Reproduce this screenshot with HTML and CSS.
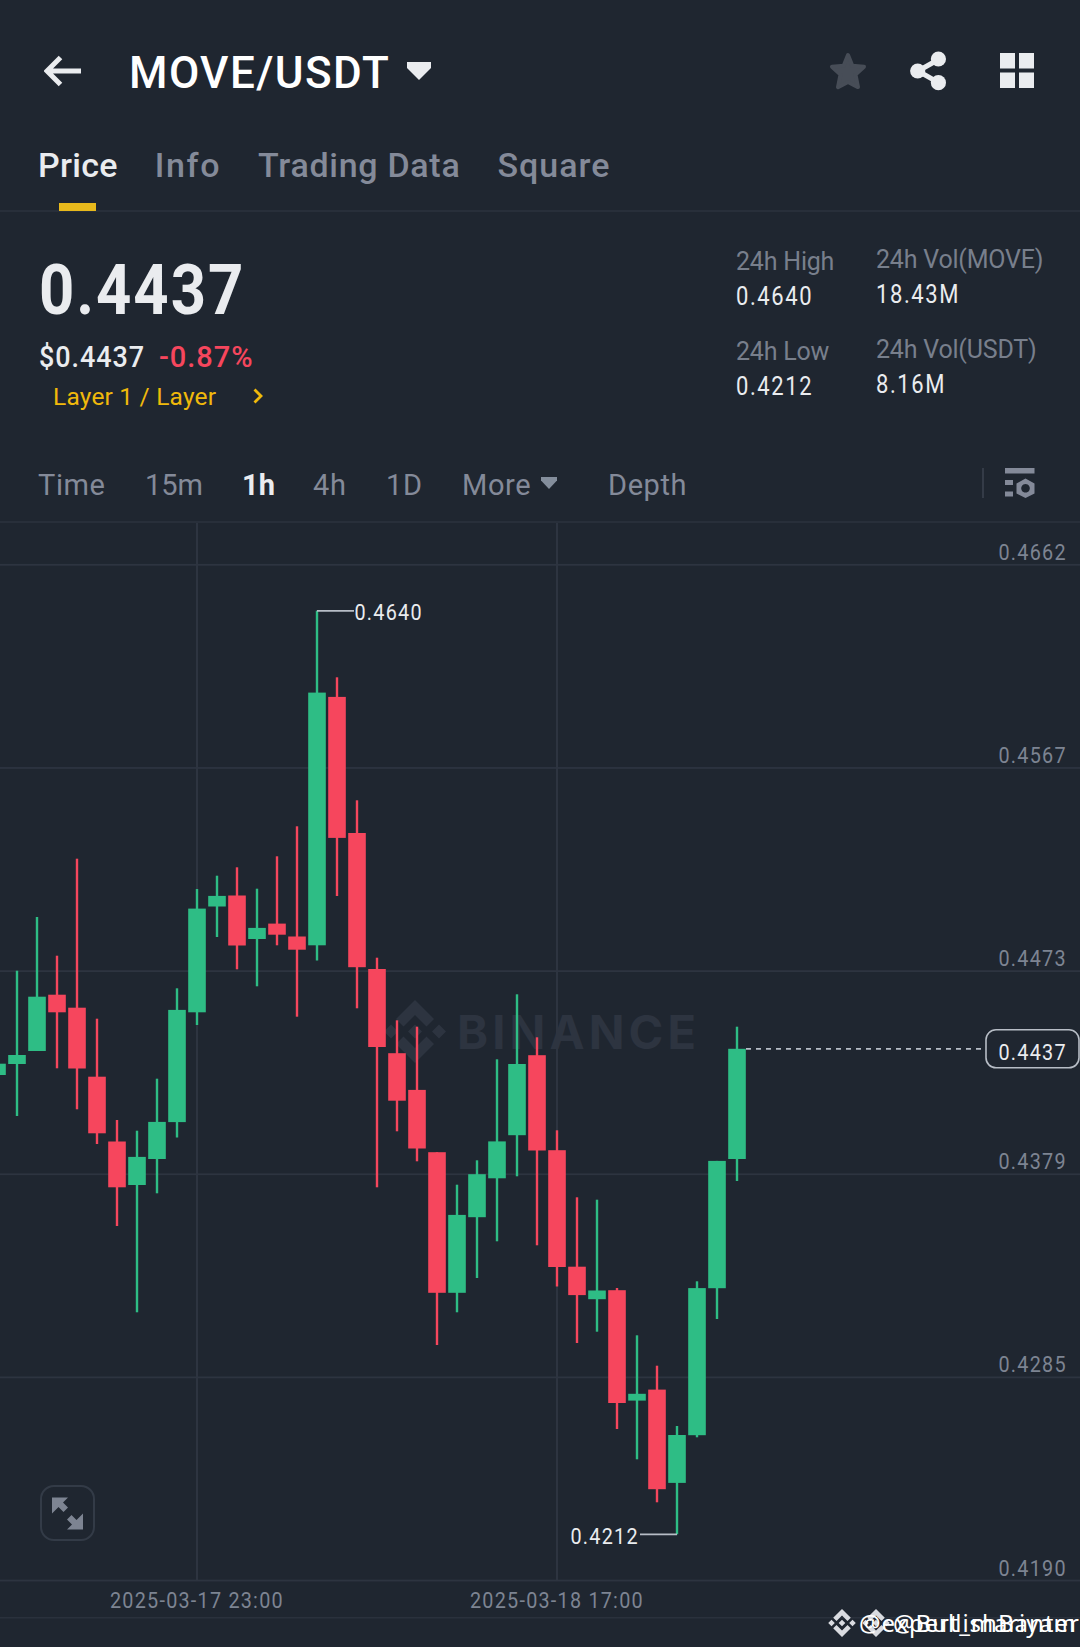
FILE: index.html
```html
<!DOCTYPE html>
<html lang="en">
<head>
    <meta charset="UTF-8">
    <meta name="viewport" content="width=device-width, initial-scale=1.0">
    <title>MOVE/USDT</title>
    <link rel="stylesheet" href="styles.css">
</head>
<body>
    <header class="header">
        <svg class="back" width="38" height="32" viewBox="0 0 38 32">
            <path d="M37 16H4M16.500 2.500L3 16l13.500 13.500" fill="none" stroke="#eaecef" stroke-width="5"/>
        </svg>
        <h1 class="pair">MOVE/USDT</h1>
        <svg class="caret" width="24" height="18" viewBox="0 0 24 18">
            <path d="M0 0h24v6L12 18 0 6z" fill="#eaecef"/>
        </svg>
        <div class="header-icons">
            <svg width="38" height="40" viewBox="0 0 38 40">
                <path d="M19 4l4.300 10.700 11.700 1-8.500 7.900 2.500 12.500L19 31l-10 5.100 2.500-12.500L3 15.700l11.700-1z" fill="#474d57" stroke="#474d57" stroke-width="4" stroke-linejoin="round"/>
            </svg>
            <svg width="36" height="40" viewBox="0 0 36 40">
                <path d="M28.500 8.500L8 20l20.500 11.700" fill="none" stroke="#eaecef" stroke-width="5"/>
                <circle cx="28.400" cy="8" r="7.600" fill="#eaecef"/>
                <circle cx="7.700" cy="20" r="7.600" fill="#eaecef"/>
                <circle cx="28.400" cy="31.700" r="7.600" fill="#eaecef"/>
            </svg>
            <svg width="34" height="35" viewBox="0 0 34 35">
                <path d="M0 0h15v15.500H0zM19 0h15v15.500H19zM0 19.500h15V35H0zM19 19.500h15V35H19z" fill="#eaecef"/>
            </svg>
        </div>
    </header>

    <nav class="tabs">
        <a class="tab active">Price</a>
        <a class="tab info">Info</a>
        <a class="tab">Trading Data</a>
        <a class="tab square">Square</a>
    </nav>

    <section class="summary">
        <div class="price-block">
            <div class="last-price num">0.4437</div>
            <div class="price-row">
                <span class="usd num">$0.4437</span>
                <span class="change">-0.87%</span>
            </div>
            <div class="category">
                <span>Layer 1 / Layer</span>
                <svg width="10" height="16" viewBox="0 0 10 16">
                    <path d="M1.500 1.500L8 8l-6.500 6.500" fill="none" stroke="#f0b90b" stroke-width="2.800"/>
                </svg>
            </div>
        </div>
        <div class="stats">
            <div class="stat-col high-low">
                <div class="stat"><span class="label">24h High</span><span class="value num">0.4640</span></div>
                <div class="stat"><span class="label">24h Low</span><span class="value num">0.4212</span></div>
            </div>
            <div class="stat-col volume">
                <div class="stat"><span class="label">24h Vol(MOVE)</span><span class="value num">18.43M</span></div>
                <div class="stat"><span class="label">24h Vol(USDT)</span><span class="value num">8.16M</span></div>
            </div>
        </div>
    </section>

    <nav class="intervals">
        <span class="w-time">Time</span>
        <span class="w-15m">15m</span>
        <span class="w-1h active">1h</span>
        <span class="w-4h">4h</span>
        <span class="w-1d">1D</span>
        <span class="w-more">More
            <svg width="16" height="12" viewBox="0 0 16 12"><path d="M0 0h16v3.500L8 12 0 3.500z" fill="#848e9c"/></svg>
        </span>
        <span>Depth</span>
        <div class="settings">
            <svg width="30" height="30" viewBox="0 0 30 30">
                <path d="M0 0h29.500v5.500H0zM0 12h8v5H0zM0 23.500h8v5H0z" fill="#848a99"/>
                <path d="M20.500 10.500l9 5v10l-9 4.500-9-4.500v-10zM20.500 16a4.300 4.300 0 1 0 .01 0z" fill="#848a99" fill-rule="evenodd"/>
            </svg>
        </div>
    </nav>

    <main class="chart">
        <svg id="chart" width="1080" height="1124" viewBox="0 523 1080 1124">
            <g id="grid"></g>
            <g id="brand" fill="#2d3440">
                <path d="M415 1000l19 19-7.500 7.500-11.500-11.500-11.500 11.500-7.500-7.500z"/>
                <path d="M415 1063l19-19-7.500-7.500-11.500 11.500-11.500-11.500-7.500 7.500z"/>
                <path d="M391 1024.500l7 7-7 7-7-7zM415 1024.500l7 7-7 7-7-7zM439 1024.500l7 7-7 7-7-7z"/>
                <text class="brand-name" x="457" y="1048.500" textLength="239">BINANCE</text>
            </g>
            <g id="candles"></g>
            <g id="labels"></g>

            <!-- last price marker -->
            <path d="M746 1048.800H982" stroke="#b7bdc6" stroke-width="1.800" stroke-dasharray="5 5"/>
            <rect x="986" y="1029.800" width="93" height="38" rx="10" fill="#1f2630" stroke="#b7bdc6" stroke-width="1.600"/>

            <!-- high / low pointers -->
            <path d="M317 610.800h37M640 1534.300h37" stroke="#b7bdc6" stroke-width="1.800"/>

            <!-- fullscreen button -->
            <rect x="41" y="1486" width="53" height="54" rx="13" fill="none" stroke="#333b47" stroke-width="2"/>
            <path d="M52 1497.500h16l-5 5 5 5-4.500 4.500-5-5-6.500 6.500zM83 1529.500H67l5-5-5-5 4.500-4.500 5 5 6.500-6.500z" fill="#7d8492"/>
            <g id="marks"></g>

            <!-- authors -->
            <g id="authors" fill="#d9dbe0">
                <path id="logo" d="M842 1609l8.800 8.800-3.300 3.300-5.500-5.500-5.500 5.500-3.300-3.300zM842 1637l8.800-8.800-3.300-3.300-5.500 5.500-5.500-5.500-3.300 3.300zM831.500 1619.700l3.300 3.300-3.300 3.300-3.300-3.300zM842 1619.700l3.300 3.300-3.300 3.300-3.300-3.300zM852.500 1619.700l3.300 3.300-3.300 3.300-3.300-3.300z"/>
                <use href="#logo" x="34"/>
                <text class="author" x="859" y="1631.500" textLength="217">@expert_mariyam</text>
                <text class="author" x="893" y="1631.500" textLength="186">@BullishBanter</text>
            </g>
        </svg>
    </main>

    <script>
        const UP = '#2ebd85';
        const DOWN = '#f6465d';
        const NS = 'http://www.w3.org/2000/svg';

        // direction, wick top, body top, body bottom, wick bottom
        const candles = [
            [1, 1063.7, 1063.7, 1075, 1075],
            [1, 970.7, 1055, 1064, 1116],
            [1, 917, 996.7, 1051, 1051],
            [0, 955.7, 994.7, 1012.3, 1068.3],
            [0, 858.7, 1007.7, 1068.5, 1109.3],
            [0, 1018.7, 1076.7, 1133.3, 1144],
            [0, 1120, 1141.5, 1187.3, 1226],
            [1, 1130.7, 1156.9, 1185, 1312.3],
            [1, 1078.7, 1121.9, 1159, 1193.3],
            [1, 988.3, 1009.9, 1122.1, 1137.5],
            [1, 889, 908.6, 1012.3, 1025],
            [1, 875.7, 895.9, 906.5, 937],
            [0, 867.3, 895.5, 945.5, 969.3],
            [1, 888.7, 927.9, 939, 986.3],
            [0, 856.3, 923.6, 934.7, 945.3],
            [0, 826.3, 936.5, 949.7, 1016.7],
            [1, 610.7, 692.6, 945.3, 960.5],
            [0, 677.3, 696.9, 837.9, 896],
            [0, 800.3, 833, 967.2, 1008.3],
            [0, 957.7, 969, 1047, 1187.3],
            [0, 1020.3, 1053.2, 1100.7, 1131.3],
            [0, 1026.7, 1089.9, 1148.5, 1161.3],
            [0, 1152.2, 1152.2, 1292.8, 1345],
            [1, 1184.7, 1214.9, 1292.8, 1312.3],
            [1, 1160.3, 1174.2, 1217.2, 1278],
            [1, 1059.3, 1141.4, 1178.3, 1241.3],
            [1, 994.3, 1064, 1135.2, 1176.3],
            [0, 1037.3, 1055.2, 1150.5, 1245.3],
            [0, 1130.3, 1150.2, 1267, 1286.5],
            [0, 1197.3, 1266.7, 1295.1, 1343],
            [1, 1199.7, 1290.5, 1299.2, 1331.7],
            [0, 1288, 1290.2, 1403, 1429],
            [1, 1335.3, 1393.8, 1400.6, 1459.3],
            [0, 1365.7, 1389.6, 1489.2, 1502.3],
            [1, 1426, 1435, 1482.9, 1534.3],
            [1, 1281.3, 1288.1, 1435.2, 1437.3],
            [1, 1160.9, 1160.9, 1288.2, 1319],
            [1, 1026.7, 1048.8, 1159, 1181]
        ];

        function add(parent, tag, attrs, text) {
            const el = document.createElementNS(NS, tag);
            for (const key in attrs) {
                el.setAttribute(key, attrs[key]);
            }
            if (text) {
                el.textContent = text;
            }
            document.getElementById(parent).appendChild(el);
        }

        function label(parent, x, y, text, cls) {
            add(parent, 'text', { class: cls, transform: 'translate(' + x + ' ' + y + ') scale(.88 1)' }, text);
        }

        const prices = ['0.4662', '0.4567', '0.4473', '0.4379', '0.4285', '0.4190'];
        prices.forEach(function(price, i) {
            const y = 564.8 + i * 203.15;
            add('grid', 'rect', { x: 0, y: y - 0.9, width: 1080, height: 1.8, fill: '#2d3440' });
            label('labels', 998.5, y - 5, price, 'axis');
        });
        [197, 557].forEach(function(x) {
            add('grid', 'rect', { x: x - 1, y: 523, width: 2, height: 1057, fill: '#2d3440' });
        });
        add('grid', 'rect', { x: 0, y: 1617, width: 1080, height: 1.5, fill: '#2a313c' });

        candles.forEach(function(c, i) {
            const x = i * 20 - 3;
            const fill = c[0] ? UP : DOWN;
            add('candles', 'rect', { x: x - 1.2, y: c[1], width: 2.4, height: c[4] - c[1], fill: fill });
            add('candles', 'rect', { x: x - 8.8, y: c[2], width: 17.6, height: c[3] - c[2], fill: fill });
        });

        label('labels', 110, 1608.4, '2025-03-17 23:00', 'axis');
        label('labels', 470, 1608.4, '2025-03-18 17:00', 'axis');
        label('marks', 354.5, 619.6, '0.4640', 'mark');
        label('marks', 570.5, 1543.6, '0.4212', 'mark');
        label('marks', 998.5, 1060.3, '0.4437', 'mark');
    </script>
</body>
</html>
```

FILE: styles.css
```css
* {
    box-sizing: border-box;
}

body {
    margin: 0;
    width: 1080px;
    height: 1647px;
    overflow: hidden;
    background-color: #1f2630;
    color: #eaecef;
    font-family: Roboto, "Liberation Sans", sans-serif;
}

.num {
    display: inline-block;
    transform: scaleX(0.88);
    transform-origin: left;
}

.header {
    display: flex;
    align-items: center;
    height: 142px;
    padding: 0 46px 0 44px;
}

.pair {
    margin: 0 0 0 47px;
    font-size: 44px;
    font-weight: 500;
    letter-spacing: 1.4px;
    line-height: 52px;
    color: #fff;
    padding-top: 4px;
}

.caret {
    margin-left: 17px;
    margin-bottom: 1px;
}

.header-icons {
    display: flex;
    align-items: center;
    margin-left: auto;
}

.header-icons svg + svg {
    margin-left: 43px;
}

.header-icons svg:last-child {
    margin-left: 54px;
    margin-bottom: 1px;
}

.tabs {
    display: flex;
    gap: 37px;
    height: 70px;
    padding-left: 38px;
    border-bottom: 2px solid #282f3a;
}

.tab {
    position: relative;
    font-size: 34px;
    font-weight: 500;
    letter-spacing: 0.7px;
    line-height: 46px;
    color: #848a99;
}

.tab.active {
    color: #eaecef;
    letter-spacing: 0.3px;
}

.tab.info {
    letter-spacing: 1.6px;
}

.tab.square {
    letter-spacing: 1px;
}

.tab.active::after {
    content: "";
    position: absolute;
    left: 21px;
    bottom: -1px;
    width: 37px;
    height: 8px;
    background-color: #e8b91c;
}

.summary {
    display: flex;
    height: 238px;
    padding: 30px 0 0 39px;
}

.price-block {
    width: 697px;
    padding-top: 6px;
}

.last-price {
    font-size: 70px;
    font-weight: 700;
    letter-spacing: 2.2px;
    line-height: 84px;
}

.price-row {
    display: flex;
    height: 43px;
    font-size: 29px;
    font-weight: 500;
    line-height: 50px;
    letter-spacing: 1px;
}

.usd {
    transform: scaleX(0.93);
}

.change {
    color: #f6465d;
    margin-left: 6px;
}

.category {
    display: flex;
    align-items: center;
    gap: 37px;
    height: 42px;
    padding-left: 14px;
    color: #f0b90b;
    font-size: 24.5px;
    letter-spacing: 0.2px;
}

.stats {
    display: flex;
}

.stat-col {
    display: flex;
    flex-direction: column;
    gap: 20px;
}

.high-low {
    width: 140px;
    padding-top: 2px;
}

.stat {
    display: flex;
    flex-direction: column;
    height: 70px;
    font-size: 25px;
    line-height: 35px;
}

.label {
    color: #787f8c;
    letter-spacing: -0.2px;
    white-space: nowrap;
}

.value {
    letter-spacing: 1.8px;
}

.intervals {
    display: flex;
    align-items: center;
    height: 73px;
    padding-left: 38px;
    padding-bottom: 1px;
    border-bottom: 2px solid #282f3a;
    color: #848a99;
    font-size: 29px;
    letter-spacing: 0.6px;
}

.intervals .active {
    color: #eaecef;
    font-weight: 700;
    letter-spacing: 0;
}

.w-time { width: 107px; }
.w-15m { width: 97px; letter-spacing: 0; }
.w-1h { width: 71px; }
.w-4h { width: 73px; }
.w-1d { width: 76px; }
.w-more { width: 146px; }

.w-more svg {
    margin-left: 2px;
    margin-bottom: 6px;
}

.settings {
    display: flex;
    margin-left: auto;
    margin-right: 45px;
    margin-bottom: 4px;
    padding-left: 21px;
    border-left: 2px solid #343b47;
}

.chart svg {
    display: block;
}

.axis,
.mark {
    font-size: 22.5px;
    letter-spacing: 1.4px;
    fill: #7d8492;
}

.mark {
    fill: #eaecef;
}

.brand-name {
    font-family: Inter, sans-serif;
    font-size: 47px;
    font-weight: 700;
}

.author {
    font-family: "Noto Sans", sans-serif;
    font-size: 24px;
    fill: #fff;
}
```
